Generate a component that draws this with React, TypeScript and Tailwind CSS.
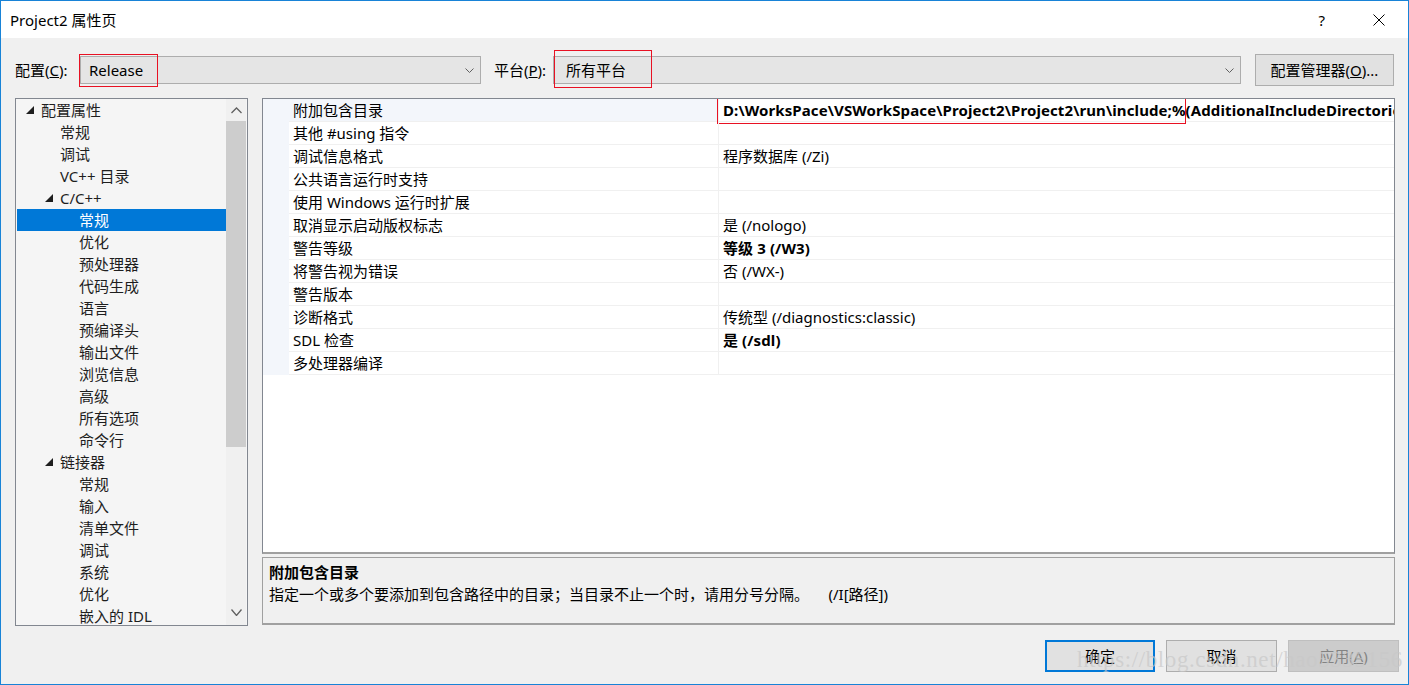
import React from "react";

type TreeItem = { level: 0 | 1 | 2; text: string; open?: boolean; selected?: boolean };

const tree: TreeItem[] = [
  { level: 0, text: "配置属性", open: true },
  { level: 1, text: "常规" },
  { level: 1, text: "调试" },
  { level: 1, text: "VC++ 目录" },
  { level: 1, text: "C/C++", open: true },
  { level: 2, text: "常规", selected: true },
  { level: 2, text: "优化" },
  { level: 2, text: "预处理器" },
  { level: 2, text: "代码生成" },
  { level: 2, text: "语言" },
  { level: 2, text: "预编译头" },
  { level: 2, text: "输出文件" },
  { level: 2, text: "浏览信息" },
  { level: 2, text: "高级" },
  { level: 2, text: "所有选项" },
  { level: 2, text: "命令行" },
  { level: 1, text: "链接器", open: true },
  { level: 2, text: "常规" },
  { level: 2, text: "输入" },
  { level: 2, text: "清单文件" },
  { level: 2, text: "调试" },
  { level: 2, text: "系统" },
  { level: 2, text: "优化" },
  { level: 2, text: "嵌入的 IDL" },
];

const props: { name: string; value: string; bold?: boolean }[] = [
  {
    name: "附加包含目录",
    value: "D:\\WorksPace\\VSWorkSpace\\Project2\\Project2\\run\\include;%(AdditionalIncludeDirectories)",
    bold: true,
  },
  { name: "其他 #using 指令", value: "" },
  { name: "调试信息格式", value: "程序数据库 (/Zi)" },
  { name: "公共语言运行时支持", value: "" },
  { name: "使用 Windows 运行时扩展", value: "" },
  { name: "取消显示启动版权标志", value: "是 (/nologo)" },
  { name: "警告等级", value: "等级 3 (/W3)", bold: true },
  { name: "将警告视为错误", value: "否 (/WX-)" },
  { name: "警告版本", value: "" },
  { name: "诊断格式", value: "传统型 (/diagnostics:classic)" },
  { name: "SDL 检查", value: "是 (/sdl)", bold: true },
  { name: "多处理器编译", value: "" },
];

const spacer = ["w-[7px]", "w-[26px]", "w-[45px]"];

function Chevron({ up = false, small = false }: { up?: boolean; small?: boolean }) {
  const w = small ? 9 : 11;
  const h = small ? 5 : 7;
  return (
    <svg width={w} height={h} viewBox={`0 0 ${w} ${h}`}>
      <polyline
        points={up ? `0.5,${h - 1} ${w / 2},1 ${w - 0.5},${h - 1}` : `0.5,0.5 ${w / 2},${h - 0.5} ${w - 0.5},0.5`}
        fill="none"
        stroke="#606060"
        strokeWidth={small ? 1 : 1.3}
      />
    </svg>
  );
}

function Triangle() {
  return (
    <svg width="8" height="8" viewBox="0 0 8 8" className="ml-[2px]">
      <polygon points="8,0 8,8 0,8" fill="#1e1e1e" />
    </svg>
  );
}

export default function App() {
  return (
    <div className="relative w-[1409px] h-[685px] overflow-hidden border border-[#1883d7] bg-[#f0f0f0] flex flex-col text-[15px] text-black font-['Noto_Sans','Noto_Sans_CJK_SC',sans-serif] leading-[20px]">
      {/* Title bar */}
      <div className="h-[37px] bg-white flex items-center pl-[9px] shrink-0">
        <span>Project2 属性页</span>
        <span className="ml-auto mr-[48px] text-[15px]">?</span>
        <svg width="12" height="12" viewBox="0 0 12 12" className="mr-[23px]">
          <path d="M0.5 0.5 L11.5 11.5 M11.5 0.5 L0.5 11.5" stroke="#000" strokeWidth="1" />
        </svg>
      </div>

      {/* Config row */}
      <div className="mt-[16px] h-[32px] flex items-center pl-[14px] shrink-0">
        <span className="w-[65px]">
          配置(<span className="underline">C</span>):
        </span>
        <div className="relative w-[401px] h-[28px] bg-[#e5e5e5] border border-[#adadad] flex items-center pl-[8px] pr-[6px]">
          <span>Release</span>
          <span className="ml-auto flex">
            <Chevron small />
          </span>
          <div className="absolute left-[-2px] top-[-3px] w-[79px] h-[33px] border border-[#e81123]" />
        </div>
        <span className="ml-[13px] w-[59px]">
          平台(<span className="underline">P</span>):
        </span>
        <div className="relative w-[688px] h-[28px] bg-[#e5e5e5] border border-[#adadad] flex items-center pl-[12px] pr-[6px]">
          <span>所有平台</span>
          <span className="ml-auto flex">
            <Chevron small />
          </span>
          <div className="absolute left-[0px] top-[-7px] w-[98px] h-[38px] border border-[#e81123]" />
        </div>
        <button className="ml-[14px] w-[139px] h-[32px] bg-[#e1e1e1] border border-[#adadad] flex items-center justify-center">
          配置管理器(<span className="underline">O</span>)...
        </button>
      </div>

      {/* Main area */}
      <div className="mt-[12px] flex pl-[14px] shrink-0">
        {/* Tree */}
        <div className="w-[233px] h-[528px] border border-[#828790] bg-[#f5f5f5] flex overflow-hidden">
          <div className="flex-1 pl-[1px] overflow-hidden">
            {tree.map((t, i) => (
              <div
                key={i}
                className={
                  "h-[22px] flex items-center whitespace-nowrap " +
                  (t.selected ? "bg-[#0078d7] text-white" : "text-[#1e1e1e]")
                }
              >
                <div className={spacer[t.level] + " shrink-0"} />
                <div className="w-[17px] shrink-0 flex items-center">{t.open && <Triangle />}</div>
                <span>{t.text}</span>
              </div>
            ))}
          </div>
          <div className="w-[20px] mr-[1px] flex flex-col items-center bg-[#f0f0f0]">
            <div className="h-[22px] flex items-center justify-center">
              <Chevron up />
            </div>
            <div className="w-full h-[326px] bg-[#cdcdcd]" />
            <div className="flex-1" />
            <div className="h-[26px] flex items-center justify-center">
              <Chevron />
            </div>
          </div>
        </div>

        {/* Right column */}
        <div className="ml-[14px] w-[1133px] flex flex-col">
          <div className="h-[456px] border border-[#828790] border-b-2 border-b-[#a0a0a0] bg-white overflow-hidden">
            {props.map((p, i) => (
              <div key={i} className="h-[23px] flex">
                <div className="w-[26px] shrink-0 bg-[#f3f6fb]" />
                <div
                  className={
                    "w-[429px] shrink-0 pl-[4px] flex items-center border-b border-[#f0f0f0] " +
                    (i === 0 ? "bg-[#f3f6fb]" : "")
                  }
                >
                  {p.name}
                </div>
                <div
                  className={
                    "relative flex-1 pl-[4px] flex items-center border-l border-b border-[#f0f0f0] whitespace-nowrap " +
                    (p.bold ? "font-bold tracking-[0.1px]" : "")
                  }
                >
                  {p.value}
                  {i === 0 && (
                    <div className="absolute left-[-2px] top-[-2px] w-[469px] h-[27px] border border-[#e81123]" />
                  )}
                </div>
              </div>
            ))}
          </div>
          <div className="mt-[3px] h-[68px] border border-[#a0a0a0] border-b-2 bg-[#f0f0f0] pl-[6px] pt-[3px]">
            <div className="font-bold h-[22px] flex items-center">附加包含目录</div>
            <div className="h-[22px] flex items-center whitespace-pre">
              指定一个或多个要添加到包含路径中的目录；当目录不止一个时，请用分号分隔。     (/I[路径])
            </div>
          </div>
        </div>
      </div>

      {/* Buttons */}
      <div className="mt-[14px] flex justify-end pr-[9px] gap-[11px] shrink-0">
        <button className="w-[110px] h-[32px] bg-[#e1e1e1] border-2 border-[#0078d7]">确定</button>
        <button className="w-[111px] h-[32px] bg-[#e1e1e1] border border-[#adadad]">取消</button>
        <button className="w-[111px] h-[32px] bg-[#cccccc] border border-[#bfbfbf] text-[#838383]">
          应用(<span className="underline">A</span>)
        </button>
      </div>

      {/* Watermark */}
      <div className="absolute left-[1076px] top-[644px] text-[23px] leading-[30px] tracking-[0.6px] text-[#c8c8c8]/70 font-['Liberation_Serif',serif] pointer-events-none">
        https://blog.csdn.net/hao5335156
      </div>
    </div>
  );
}
